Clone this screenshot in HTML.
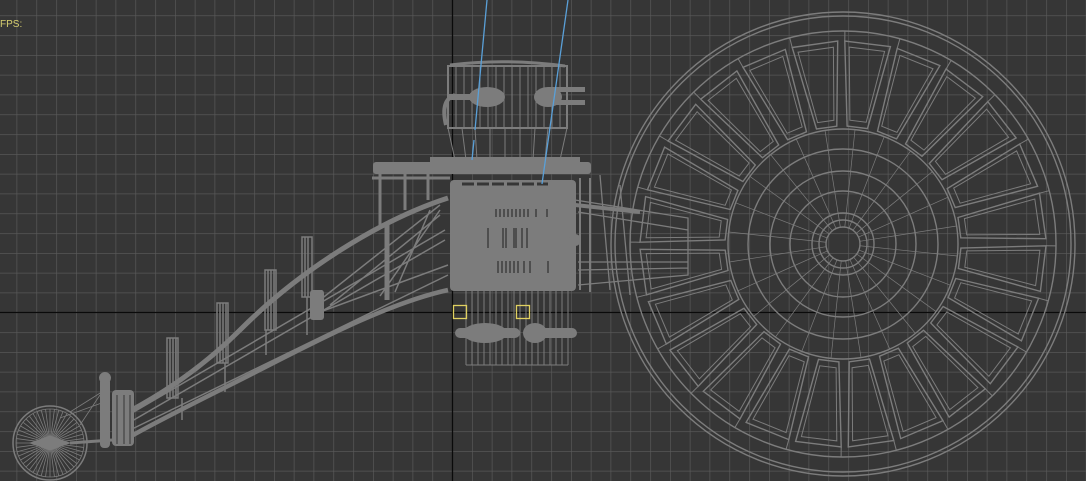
<!DOCTYPE html>
<html><head><meta charset="utf-8"><style>
html,body{margin:0;padding:0;background:#363636;overflow:hidden}
svg{display:block}
</style></head><body>
<svg id="s" width="1086" height="481" viewBox="0 0 1086 481" xmlns="http://www.w3.org/2000/svg">
<defs>
<pattern id="g" x="16.6" y="15.4" width="19.8" height="19.8" patternUnits="userSpaceOnUse">
<path d="M0 0H19.8M0 0V19.8" stroke="#5c5c5c" stroke-width="1.2" fill="none"/>
</pattern>
</defs>
<rect width="1086" height="481" fill="#363636"/>
<rect width="1086" height="481" fill="url(#g)"/>
<line x1="0" y1="312.5" x2="1086" y2="312.5" stroke="#0a0a0a" stroke-width="1.3"/>
<line x1="452.5" y1="0" x2="452.5" y2="481" stroke="#0a0a0a" stroke-width="1.3"/>
<text x="0" y="27" font-family="Liberation Sans, sans-serif" font-size="10" fill="#d8d070">FPS:</text>
<g id="wheel" fill="none" stroke="#7c7c7c" stroke-width="1.4"></g>
<g id="sw" fill="none" stroke="#7c7c7c" stroke-width="0.8"></g>
<g fill="none" stroke="#7c7c7c">
 <path d="M448 198 C380 220 300 270 240 330 C200 370 160 395 128 412" stroke-width="5"/>
 <path d="M448 290 C380 305 300 350 230 385 C190 405 150 425 128 438" stroke-width="4.5"/>
 <path d="M440 205 L320 300 M440 215 L330 305 M445 230 L120 420 M445 240 L125 425 M448 265 L320 312 M448 275 L130 430 M440 210 L380 296 M430 210 L395 292" stroke-width="1.5"/>
 <path d="M387 225 L387 300 M320 290 L320 318" stroke-width="5"/>
 <path d="M110 400 L60 418 M105 390 L70 412 M100 395 L80 425" stroke-width="0.8"/>
 <g stroke-width="1.5">
 <rect x="167" y="338" width="11" height="60"/><rect x="217" y="303" width="11" height="60"/>
 <rect x="265" y="270" width="11" height="60"/><rect x="302" y="237" width="10" height="60"/>
 <path d="M170 338V398M173 338V398M176 338V398M220 303V363M223 303V363M226 303V363M268 270V330M271 270V330M274 270V330M305 237V297M308 237V297"/>
 <path d="M182 398V420M225 363V392M266 330V355M307 297V335"/>
 </g>
 <path d="M575 200 L688 218 L688 275 L578 285 M578 212 L688 230 M578 262 L688 262 M578 270 L688 268 M600 175 L610 290 M620 185 L630 295" stroke-width="1.3"/>
 <path d="M575 205 L640 212" stroke-width="4"/>
 <path d="M380 170V228M405 170V210M428 172V200M372 178H450" stroke-width="3"/>
 <path d="M580 178V290M590 178V292" stroke-width="2"/>
 <rect x="448" y="66" width="119" height="62" stroke-width="2"/>
 <path d="M456 66V128M464 66V128M472 66V128M480 66V128M488 66V128M496 66V128M504 66V128M512 66V128M520 66V128M528 66V128M536 66V128M544 66V128M552 66V128M560 66V128" stroke-width="1"/>
 <path d="M448 128 L455 160 M567 128 L560 160 M462 128 L466 160 M475 128 L477 160 M490 128 L490 160 M505 128 L505 160 M520 128 L520 160 M535 128 L533 160 M548 128 L545 160" stroke-width="1"/>
 <path d="M450 65 Q505 58 565 66" stroke-width="3"/>
 <path d="M455 95 Q440 100 446 125" stroke-width="4"/>
</g>
<g fill="#7c7c7c" stroke="none">
 <ellipse cx="487" cy="97" rx="18" ry="10"/><rect x="447" y="94" width="40" height="6"/>
 <ellipse cx="548" cy="97" rx="14" ry="10"/><rect x="548" y="87" width="37" height="5"/><rect x="548" y="100" width="37" height="5"/>
 <rect x="373" y="162" width="218" height="12" rx="3"/>
 <rect x="430" y="157" width="150" height="8"/>
 <rect x="450" y="180" width="126" height="111" rx="4"/>
 <circle cx="575" cy="240" r="6"/>
 <rect x="455" y="328" width="65" height="10" rx="5"/><ellipse cx="485" cy="333" rx="22" ry="10"/>
 <rect x="525" y="328" width="52" height="10" rx="5"/><ellipse cx="535" cy="333" rx="12" ry="10"/>
 <rect x="100" y="378" width="10" height="70" rx="4"/><circle cx="105" cy="378" r="6"/>
 <rect x="112" y="390" width="22" height="56" rx="4"/>
 <rect x="310" y="290" width="14" height="30" rx="3"/>
</g>
<g stroke="#363636" stroke-width="1.3">
 <path d="M496 209V217M500 209V217M504 209V217M508 209V217M512 209V217M516 209V217M520 209V217M524 209V217M528 209V217M536 209V217M547 209V217M488 228V248M503 228V248M506 228V248M514 228V248M516 228V248M522 228V248M527 228V248M498 261V273M502 261V273M506 261V273M510 261V273M514 261V273M518 261V273M524 261V273M530 261V273M548 261V273"/>
 <path d="M462 184H548" stroke-width="3" stroke-dasharray="12 3"/>
 <path d="M117 395V444M124 395V444M130 395V444" stroke-width="1"/>
</g>
<g stroke="#7c7c7c" stroke-width="1" fill="none">
 <path d="M466 291V365M472 291V365M478 291V365M484 291V365M490 291V365M496 291V365M502 291V365M508 291V365M514 291V365M520 291V365M526 291V365M532 291V365M538 291V365M544 291V365M550 291V365M556 291V365M562 291V365M568 291V365M466 365H568"/>
</g>
<rect x="453.5" y="305.5" width="13" height="13" fill="none" stroke="#e0d060" stroke-width="1.3"/>
<rect x="516.5" y="305.5" width="13" height="13" fill="none" stroke="#e0d060" stroke-width="1.3"/>
<path d="M487 0 L475 130 M474 140 L472 160 M568 0 L542 184" stroke="#5aa0d8" stroke-width="1.3" fill="none"/>
</svg>
<script>
var NS="http://www.w3.org/2000/svg";
function el(p,t,a){var e=document.createElementNS(NS,t);for(var k in a)e.setAttribute(k,a[k]);p.appendChild(e);return e;}
var w=document.getElementById('wheel'),cx=843,cy=244;
[232,228,213,115,95,73,53,31,24,17].forEach(function(r){el(w,'circle',{cx:cx,cy:cy,r:r});});
function P(r,d){var a=d*Math.PI/180;return (cx+Math.sin(a)*r).toFixed(1)+','+(cy-Math.cos(a)*r).toFixed(1);}
for(var i=0;i<24;i++){
 var a0=i*15+0.5,a1=i*15+13.5;
 el(w,'polygon',{points:[P(118,a0+1.5),P(203,a0),P(203,a1),P(118,a1-1.5)].join(' ')});
 el(w,'polygon',{points:[P(124,a0+2.7),P(197,a0+1.3),P(197,a1-1.3),P(124,a1-2.7)].join(' '),'stroke-width':1});
 var q=P(203,a0).split(','),r2=P(213,a0).split(',');
 el(w,'line',{x1:q[0],y1:q[1],x2:r2[0],y2:r2[1],'stroke-width':1});
 var b=(i*15+6)*Math.PI/180;
 el(w,'line',{x1:cx+Math.sin(b)*17,y1:cy-Math.cos(b)*17,x2:cx+Math.sin(b)*115,y2:cy-Math.cos(b)*115,'stroke-width':0.7});
}
var s=document.getElementById('sw');
el(s,'circle',{cx:50,cy:443,r:37,'stroke-width':1.5});el(s,'circle',{cx:50,cy:443,r:34});
for(var j=0;j<48;j++){var c=j*Math.PI/24;el(s,'line',{x1:50+Math.cos(c)*4,y1:443+Math.sin(c)*4,x2:50+Math.cos(c)*34,y2:443+Math.sin(c)*34});}
el(s,'path',{d:'M30 443 L50 436 L70 443 L50 450Z',fill:'#7c7c7c'});
el(s,'line',{x1:70,y1:443,x2:112,y2:440,'stroke-width':3});
</script>
</body></html>
